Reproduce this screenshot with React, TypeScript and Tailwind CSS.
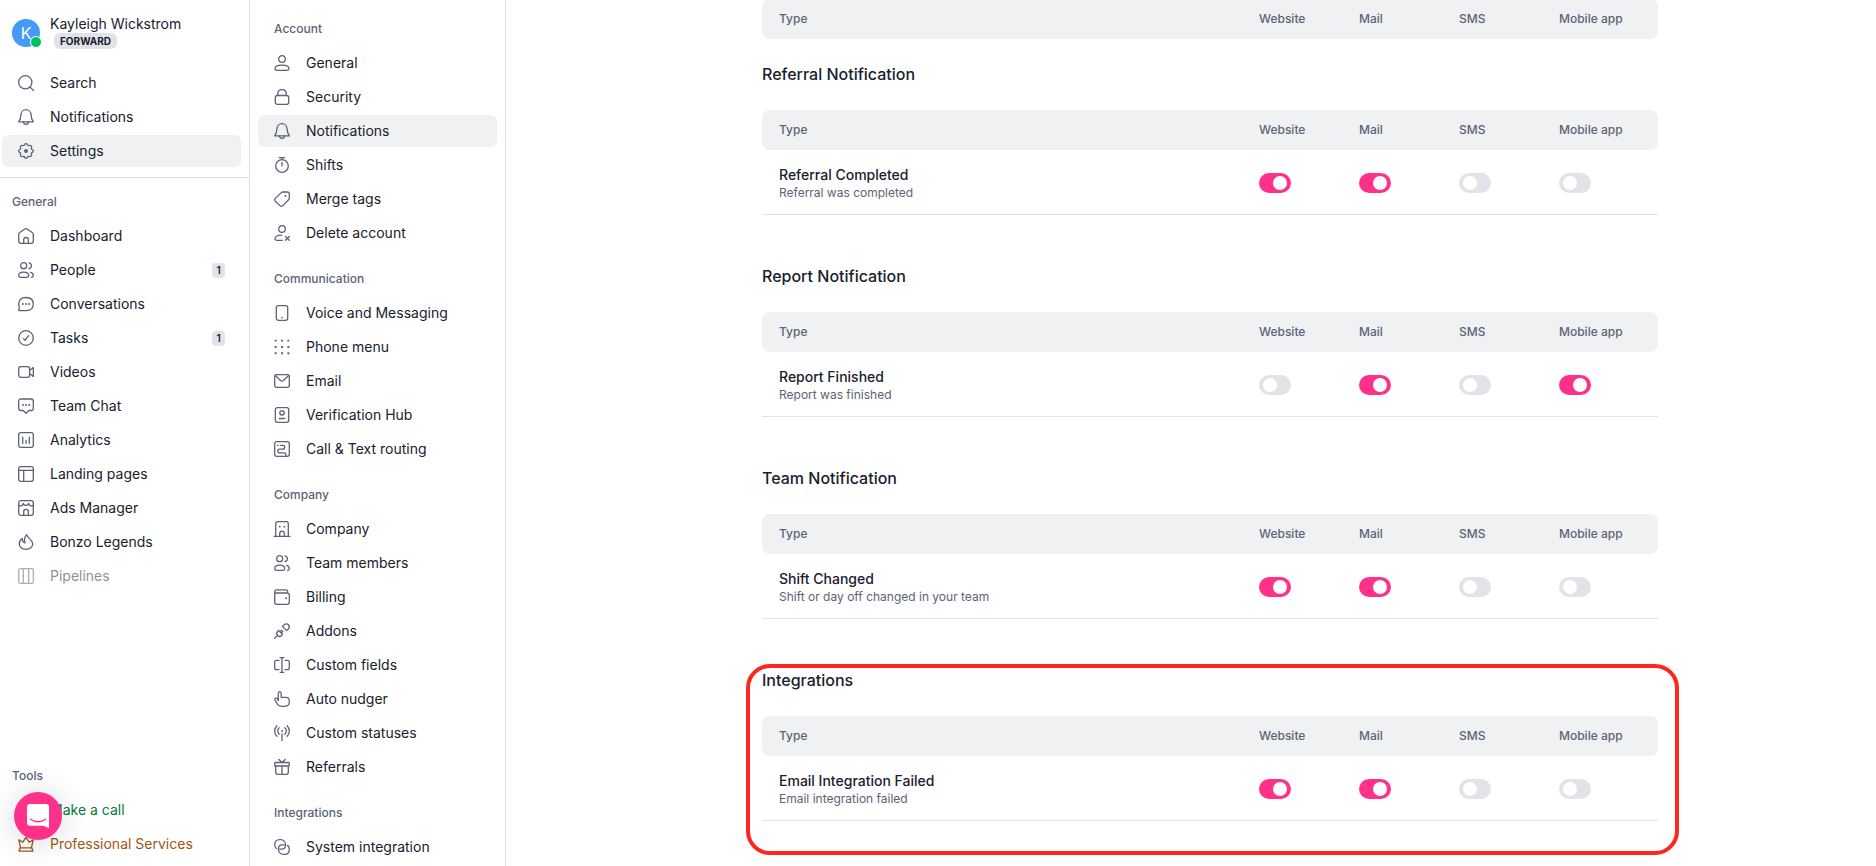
import { useState, type ReactNode } from "react";
import { clsx } from "clsx";

type NavItem = {
  label: string;
  icon: keyof typeof icons;
  count?: number;
  active?: boolean;
  muted?: boolean;
  className?: string;
};

type NotificationRow = {
  title: string;
  description: string;
  channels: boolean[];
};

type NotificationGroup = {
  title: string;
  rows: NotificationRow[];
  highlighted?: boolean;
};

// All icons are drawn on a 16x16 grid
const icons = {
  search: (
    <>
      <circle cx="7.3" cy="7.3" r="6.6" />
      <path d="m12.1 12.1 3.4 3.4" />
    </>
  ),
  bell: (
    <>
      <path d="M8 .7C5.2.7 3.1 2.8 3 5.6c-.1 3-.6 4.9-2.3 7.3h14.6c-1.7-2.4-2.2-4.300-2.300-7.300C12.900 2.800 10.800.7 8 .7Z" />
      <path d="M5.400 13c.2 1.500 1.200 2.300 2.600 2.300s2.400-.8 2.600-2.300" />
    </>
  ),
  gear: (
    <>
      <path d="M14.330 6.540A1.600 1.600 0 0 1 14.330 9.460A1.300 1.300 0 0 0 13.510 11.440A1.600 1.600 0 0 1 11.440 13.510A1.300 1.300 0 0 0 9.460 14.330A1.600 1.600 0 0 1 6.540 14.330A1.300 1.300 0 0 0 4.560 13.510A1.600 1.600 0 0 1 2.490 11.440A1.300 1.300 0 0 0 1.670 9.460A1.600 1.600 0 0 1 1.670 6.540A1.300 1.300 0 0 0 2.490 4.560A1.600 1.600 0 0 1 4.560 2.490A1.300 1.300 0 0 0 6.540 1.670A1.600 1.600 0 0 1 9.460 1.670A1.300 1.300 0 0 0 11.440 2.490A1.600 1.600 0 0 1 13.510 4.560A1.300 1.300 0 0 0 14.330 6.540Z" />
      <circle cx="8" cy="8" r="1.300" fill="currentColor" />
    </>
  ),
  home: (
    <>
      <path d="M.7 6.500c0-.9.3-1.500 1.100-2L6.800 1c.8-.5 1.600-.5 2.400 0l5 3.500c.8.5 1.100 1.100 1.100 2v6.600c0 1.300-.9 2.200-2.200 2.200H2.900c-1.300 0-2.200-.9-2.200-2.200V6.500Z" />
      <path d="M5.700 15.200v-3.400c0-1.500 1-2.300 2.300-2.300s2.300.8 2.300 2.300v3.400" />
    </>
  ),
  people: (
    <>
      <circle cx="5.700" cy="3.700" r="3" />
      <path d="M.7 13.600c0-2.100 2-3.400 5-3.400s5 1.300 5 3.400c0 1-.7 1.700-1.800 1.700H2.500c-1.100 0-1.800-.7-1.800-1.700Z" />
      <path d="M11 .9c1.500.3 2.400 1.300 2.400 2.800S12.500 6.200 11 6.500M12.700 10.300c1.700.5 2.600 1.700 2.600 3.200 0 1-.6 1.700-1.700 1.800" />
    </>
  ),
  chat: (
    <>
      <path d="M.7 8C.7 4 3.300 1.500 8 1.500S15.300 4 15.300 8 12.700 14.600 8 14.600H1.200c-.5 0-.7-.5-.4-.9.500-.7.7-1.400.5-2.300C.9 10.300.7 9.200.7 8Z" />
      <path d="M4.900 8h.1M8 8h.1M11.100 8h.1" strokeWidth="1.800" />
    </>
  ),
  check: (
    <>
      <circle cx="8" cy="8" r="7.300" />
      <path d="m5.400 8.600 1.800 1.700 3.300-4.600" />
    </>
  ),
  video: (
    <>
      <rect x=".7" y="2.700" width="10.900" height="10.600" rx="2.200" />
      <path d="m11.600 6.500 3.700-2.900v8.800l-3.700-2.900" />
    </>
  ),
  teamChat: (
    <>
      <path d="M2.900 1h10.200c1.300 0 2.200.9 2.200 2.200v7.100c0 1.300-.9 2.200-2.200 2.200h-2.200L8 15.200l-2.900-2.700H2.900c-1.300 0-2.200-.9-2.200-2.200V3.200C.7 1.900 1.600 1 2.900 1Z" />
      <path d="M4.900 7h.1M8 7h.1M11.100 7h.1" strokeWidth="1.800" />
    </>
  ),
  analytics: (
    <>
      <rect x=".7" y=".7" width="14.600" height="14.600" rx="2" />
      <path d="M4.700 5.200v6.300M8 8.500v3M11.300 5.200v6.300" />
    </>
  ),
  layout: (
    <>
      <rect x=".7" y=".7" width="14.600" height="14.600" rx="2" />
      <path d="M.7 4.300h14.600M5.700 4.300v11" />
    </>
  ),
  store: (
    <>
      <rect x=".7" y=".7" width="14.600" height="14.600" rx="2.200" />
      <path d="M.8 5.200c1.300 1.200 3.800 1 4.500-1.700.5 2.400 4.900 2.400 5.400 0 .7 2.700 3.200 2.900 4.500 1.700" />
      <path d="M5.700 15.200v-3.500c0-1.500 1-2.300 2.300-2.300s2.300.8 2.300 2.300v3.500" />
    </>
  ),
  flame: (
    <path d="M8.700.8C9 3.500 14.700 6 14.700 10c0 3-2.800 5.300-6.700 5.300S1.300 13 1.300 10c0-2.200 1-4.200 2.800-5.500.1 2.200 1 3.700 3 4.500C6 6 6.500 3 8.700.8Z" />
  ),
  columns: (
    <>
      <rect x=".7" y=".7" width="14.600" height="14.600" rx="1.500" />
      <path d="M5.300.7v14.600M10.700.7v14.600" />
    </>
  ),
  phoneCall: <path d="M2 1.500h3l1.500 3.700L4.700 6.700a9 9 0 0 0 4.600 4.600l1.500-1.800 3.700 1.500v3C7.500 15 1 8.500 2 1.500Z" />,
  crown: (
    <>
      <path d="M2.600 11.800.8 3.900l4 2.300L8 1.300l3.200 4.900 4-2.300-1.800 7.900" />
      <path d="M2.200 11.800h11.600l1.200 3.400H1l1.200-3.400Z" />
    </>
  ),
  user: (
    <>
      <circle cx="8" cy="4" r="3.300" />
      <path d="M1 13.600c0-2.200 2.800-3.500 7-3.500s7 1.300 7 3.500c0 1-.7 1.700-1.900 1.700H2.900C1.700 15.300 1 14.600 1 13.600Z" />
    </>
  ),
  lock: (
    <>
      <rect x="1.300" y="6.500" width="13.400" height="8.800" rx="2" />
      <path d="M3.700 6.500V5c0-2.700 1.700-4.300 4.300-4.300s4.300 1.600 4.300 4.300v1.500" />
    </>
  ),
  timer: (
    <>
      <circle cx="8" cy="9" r="6.300" />
      <path d="M5.300.7h5.400M8 .7v2M8 5.500V9" />
    </>
  ),
  tag: (
    <>
      <path d="M8.800 1h4.500c1.200 0 2 .8 2 2v4.200c0 .6-.2 1.100-.6 1.500l-5.900 5.900c-.9.9-2 .9-2.900 0L1.300 10.200c-.8-.8-.8-2 0-2.800l6-5.800c.4-.4.900-.6 1.500-.6Z" />
      <path d="M11.300 5h.1" strokeWidth="1.800" />
    </>
  ),
  userRemove: (
    <>
      <circle cx="8" cy="4" r="3.300" />
      <path d="M8.300 15.300H2.900c-1.200 0-1.900-.7-1.900-1.600 0-2.100 2.600-3.500 6.700-3.500M11.500 11.500l3.800 3.800M15.300 11.500l-3.800 3.800" />
    </>
  ),
  device: (
    <>
      <rect x="2.300" y=".7" width="11.400" height="14.600" rx="2" />
      <path d="M8 12.600h.1" strokeWidth="1.600" />
    </>
  ),
  keypad: (
    <path
      d="M1.600 1.600h.1M8 1.600h.1M14.300 1.600h.1M1.600 8h.1M8 8h.1M14.300 8h.1M1.600 14.300h.1M8 14.300h.1M14.300 14.300h.1"
      strokeWidth="1.900"
      strokeLinecap="square"
    />
  ),
  mail: (
    <>
      <rect x=".7" y="1.700" width="14.600" height="12.600" rx="2" />
      <path d="m1.300 2.500 5.300 5c.9.8 1.900.8 2.800 0l5.300-5" />
    </>
  ),
  idCard: (
    <>
      <rect x="1.300" y=".7" width="13.400" height="14.600" rx="2" />
      <circle cx="8" cy="5.800" r="2.200" />
      <path d="M5.200 11.500h5.600" />
    </>
  ),
  routing: (
    <>
      <rect x=".7" y=".7" width="14.600" height="14.600" rx="2" />
      <path d="M3.800 4.300h.1" strokeWidth="1.600" />
      <path d="M6.300 4.300h2.300c1.300 0 2.100.8 2.100 2s-.8 1.900-2.100 1.900H5.800c-1.200 0-2 .7-2 1.800s.8 1.900 2 1.900h4.500c1 0 1.500.5 1.500 1.500v1.500" />
    </>
  ),
  building: (
    <>
      <path d="M1.700 15.300V2.700c0-1.300.7-2 2-2h8.600c1.300 0 2 .7 2 2v12.600M0 15.300h16" />
      <path d="M5.700 15.200v-2.800c0-1.500 1-2.300 2.300-2.300s2.300.8 2.300 2.300v2.800" />
      <path d="M5.700 5.700h.1M10.300 5.700h.1" strokeWidth="1.800" />
    </>
  ),
  wallet: (
    <>
      <path d="M.7 2.600v10.500c0 1.400.8 2.200 2.200 2.200h10.200c1.400 0 2.200-.8 2.200-2.200V6c0-1.300-.8-2-2.200-2H2.400C1.300 4 .7 3.500.7 2.600S1.400.9 2.400.9h9.300c1.300 0 2 .7 2 2V4" />
      <path d="M12 9.300h.1" strokeWidth="1.900" />
    </>
  ),
  plug: (
    <>
      <path d="m4.600 7.400 4 4-1 1.100c-1.200 1.200-2.900 1.200-4 .1s-1.100-2.900 0-4.100l1-1.100ZM8.400 3.400l4.200 4.200 1.700-1.600c1.200-1.200 1.200-3 .1-4.200s-3-1.200-4.200 0L8.400 3.400Z" />
      <path d="m.7 15.300 2.900-2.900M6 8.800l1.700-1.700M7.200 10l1.700-1.700" />
    </>
  ),
  textField: (
    <path d="M8 1v14M6.200.7h3.600M6.200 15.300h3.600M5 3.300H2.600C1.400 3.300.7 4 .7 5.200v5.600c0 1.200.7 1.900 1.900 1.900H5M11 3.300h2.400c1.200 0 1.900.7 1.900 1.900v5.600c0 1.200-.7 1.900-1.900 1.900H11" />
  ),
  pointer: (
    <path d="M4.300 9.600V2.200C4.300 1.300 4.900.7 5.700.7s1.500.6 1.500 1.500v4.100h4.600c2.300 0 3.500 1.200 3.500 3.300v1.200c0 2.800-1.700 4.500-4.400 4.500H7.400c-1.900 0-3.200-.7-4.100-2.300L1 9.100c-.5-.9-.2-1.600.5-1.900.8-.3 1.500 0 2 .8l.8 1.600" />
  ),
  broadcast: (
    <>
      <path d="M8 9v6.600M5.200 2.800c-2 1.700-2 4.800 0 6.500M10.800 2.800c2 1.700 2 4.800 0 6.500M2.900.8c-3 3-3 7.600 0 10.500M13.100.8c3 3 3 7.600 0 10.500" />
      <path d="M8 6h.1" strokeWidth="1.800" />
    </>
  ),
  gift: (
    <>
      <path d="M1.700 7v6.200c0 1.300.8 2.100 2.100 2.100h8.400c1.300 0 2.100-.8 2.100-2.100V7M8 7v8.300" />
      <rect x=".7" y="3.500" width="14.600" height="3.500" rx=".8" />
      <path d="M8 3.500 4.800.5M8 3.500l3.200-3" />
    </>
  ),
  link: (
    <>
      <path d="M10.300 5.900h-2c-2.300 0-3.900 1.700-3.900 4.100 0 3.200 2 5.300 5 5.300h1c3 0 4.900-1.900 4.900-4.900 0-1.800-.6-3.200-1.700-4" />
      <path d="M5.700 10.100h2c2.300 0 3.900-1.700 3.900-4.100 0-3.200-2-5.300-5-5.300h-1C2.600.7.7 2.600.7 5.600c0 1.800.6 3.200 1.700 4" />
    </>
  ),
};

const profileNav: NavItem[] = [
  { label: "Search", icon: "search" },
  { label: "Notifications", icon: "bell" },
  { label: "Settings", icon: "gear", active: true },
];

const generalNav: NavItem[] = [
  { label: "Dashboard", icon: "home" },
  { label: "People", icon: "people", count: 1 },
  { label: "Conversations", icon: "chat" },
  { label: "Tasks", icon: "check", count: 1 },
  { label: "Videos", icon: "video" },
  { label: "Team Chat", icon: "teamChat" },
  { label: "Analytics", icon: "analytics" },
  { label: "Landing pages", icon: "layout" },
  { label: "Ads Manager", icon: "store" },
  { label: "Bonzo Legends", icon: "flame" },
  { label: "Pipelines", icon: "columns", muted: true },
];

const toolsNav: NavItem[] = [
  { label: "Make a call", icon: "phoneCall", className: "text-[#067a3c]" },
  { label: "Professional Services", icon: "crown", className: "text-[#a05714]" },
];

const settingsNav: { heading: string; items: NavItem[] }[] = [
  {
    heading: "Account",
    items: [
      { label: "General", icon: "user" },
      { label: "Security", icon: "lock" },
      { label: "Notifications", icon: "bell", active: true },
      { label: "Shifts", icon: "timer" },
      { label: "Merge tags", icon: "tag" },
      { label: "Delete account", icon: "userRemove" },
    ],
  },
  {
    heading: "Communication",
    items: [
      { label: "Voice and Messaging", icon: "device" },
      { label: "Phone menu", icon: "keypad" },
      { label: "Email", icon: "mail" },
      { label: "Verification Hub", icon: "idCard" },
      { label: "Call & Text routing", icon: "routing" },
    ],
  },
  {
    heading: "Company",
    items: [
      { label: "Company", icon: "building" },
      { label: "Team members", icon: "people" },
      { label: "Billing", icon: "wallet" },
      { label: "Addons", icon: "plug" },
      { label: "Custom fields", icon: "textField" },
      { label: "Auto nudger", icon: "pointer" },
      { label: "Custom statuses", icon: "broadcast" },
      { label: "Referrals", icon: "gift" },
    ],
  },
  {
    heading: "Integrations",
    items: [{ label: "System integration", icon: "link" }],
  },
];

const channelNames = ["Website", "Mail", "SMS", "Mobile app"];

const groups: NotificationGroup[] = [
  {
    title: "Referral Notification",
    rows: [
      {
        title: "Referral Completed",
        description: "Referral was completed",
        channels: [true, true, false, false],
      },
    ],
  },
  {
    title: "Report Notification",
    rows: [
      {
        title: "Report Finished",
        description: "Report was finished",
        channels: [false, true, false, true],
      },
    ],
  },
  {
    title: "Team Notification",
    rows: [
      {
        title: "Shift Changed",
        description: "Shift or day off changed in your team",
        channels: [true, true, false, false],
      },
    ],
  },
  {
    title: "Integrations",
    highlighted: true,
    rows: [
      {
        title: "Email Integration Failed",
        description: "Email integration failed",
        channels: [true, true, false, false],
      },
    ],
  },
];

function Icon({ name, className }: { name: keyof typeof icons; className?: string }) {
  return (
    <svg
      viewBox="0 0 16 16"
      fill="none"
      stroke="currentColor"
      strokeWidth="1.3"
      strokeLinecap="round"
      strokeLinejoin="round"
      aria-hidden="true"
      className={clsx("size-4 shrink-0 overflow-visible", className)}
    >
      {icons[name]}
    </svg>
  );
}

function NavLink({ item }: { item: NavItem }) {
  return (
    <a
      href="#"
      className={clsx(
        "flex h-8 items-center gap-4 rounded-md px-4 text-sm",
        item.active && "bg-[#f0f1f3]",
        item.muted && "opacity-50",
        item.className
      )}
    >
      <Icon name={item.icon} className={item.className ? undefined : "text-[#5b6376]"} />
      <span className="flex-1 truncate">{item.label}</span>
      {item.count !== undefined && (
        <span className="w-[13px] rounded bg-[#e2e3e8] text-center text-[10px] leading-[15px] font-semibold">
          {item.count}
        </span>
      )}
    </a>
  );
}

function NavList({ items }: { items: NavItem[] }) {
  return (
    <ul className="flex flex-col gap-0.5">
      {items.map((item) => (
        <li key={item.label}>
          <NavLink item={item} />
        </li>
      ))}
    </ul>
  );
}

function NavHeading({ children, className }: { children: ReactNode; className?: string }) {
  return <h2 className={clsx("pb-2 text-xs leading-5 font-medium text-[#5b6376]", className)}>{children}</h2>;
}

function Toggle({ label, defaultChecked }: { label: string; defaultChecked: boolean }) {
  const [checked, setChecked] = useState(defaultChecked);

  return (
    <input
      type="checkbox"
      role="switch"
      aria-label={label}
      checked={checked}
      onChange={(e) => setChecked(e.target.checked)}
      className="relative block h-5 w-8 cursor-pointer appearance-none rounded-full bg-[#e2e3e8] before:absolute before:top-[3px] before:left-1 before:size-3.5 before:rounded-full before:bg-white checked:bg-[#ff318a] checked:before:left-3.5"
    />
  );
}

function NotificationTable({ rows }: { rows: NotificationRow[] }) {
  return (
    <table className="w-full table-fixed border-separate border-spacing-0 text-left">
      <thead>
        <tr className="h-10 text-xs text-[#5b6376]">
          <th className="rounded-l-lg bg-[#f0f1f3] pl-[17px] font-medium">Type</th>
          {channelNames.map((name) => (
            <th key={name} className="w-25 bg-[#f0f1f3] pl-4 font-medium last:w-[115px] last:rounded-r-lg">
              {name}
            </th>
          ))}
        </tr>
      </thead>
      <tbody>
        {rows.map((row) => (
          <tr key={row.title} className="h-[65px]">
            <td className="border-b border-[#e2e3e8] pt-0.5 pl-[17px]">
              <p className="text-sm leading-5 font-medium">{row.title}</p>
              <p className="text-xs leading-4 text-[#5b6376]">{row.description}</p>
            </td>
            {row.channels.map((enabled, i) => (
              <td key={channelNames[i]} className="border-b border-[#e2e3e8] pt-0.5 pl-4">
                <Toggle label={`${row.title} ${channelNames[i]}`} defaultChecked={enabled} />
              </td>
            ))}
          </tr>
        ))}
      </tbody>
    </table>
  );
}

function MainSidebar() {
  return (
    <aside className="flex w-[250px] shrink-0 flex-col overflow-hidden border-r border-[#e2e3e8] pb-1.5">
      <div className="flex items-start gap-2.5 px-3 pt-[15px] pb-[18px]">
        <div className="relative mt-1 flex size-7 shrink-0 items-center justify-center rounded-full bg-[#4599f7] text-white">
          K
          <span className="absolute -right-0.5 -bottom-px size-3 rounded-full border border-white bg-[#00bf5c]" />
        </div>
        <div>
          <p className="text-sm leading-[18px]">Kayleigh Wickstrom</p>
          <p className="ml-1 w-fit rounded-md bg-[#e2e3e8] px-1.5 text-[10px] leading-4 font-bold">FORWARD</p>
        </div>
      </div>
      <nav className="border-b border-[#e2e3e8] pr-2 pb-2.5 pl-0.5">
        <NavList items={profileNav} />
      </nav>
      <nav className="pt-3.5 pr-2 pl-0.5">
        <NavHeading className="pl-2.5">General</NavHeading>
        <NavList items={generalNav} />
      </nav>
      <nav className="mt-auto pr-2 pl-0.5">
        <NavHeading className="pl-2.5">Tools</NavHeading>
        <NavList items={toolsNav} />
      </nav>
    </aside>
  );
}

function SettingsSidebar() {
  return (
    <aside className="w-64 shrink-0 overflow-y-auto border-r border-[#e2e3e8] px-2 [scrollbar-width:none]">
      {settingsNav.map((group) => (
        <nav key={group.heading} className="pt-5 first:pt-[19px]">
          <NavHeading className="pl-4">{group.heading}</NavHeading>
          <NavList items={group.items} />
        </nav>
      ))}
    </aside>
  );
}

export default function App() {
  return (
    <div className="flex h-screen overflow-hidden bg-white font-[Inter,sans-serif] text-[#18212d]">
      <MainSidebar />
      <SettingsSidebar />

      <main className="min-w-0 flex-1 overflow-y-auto pl-[38px] [scrollbar-width:none]">
        <div className="mx-auto -mt-px max-w-4xl">
          <NotificationTable rows={[]} />
          <div className="pt-[23px]">
            {groups.map((group) => (
              <section key={group.title} className="relative pb-[49px]">
                <h3 className="mb-6 text-base leading-6 font-medium">{group.title}</h3>
                <NotificationTable rows={group.rows} />
                {group.highlighted && (
                  <div className="pointer-events-none absolute -top-1 -right-[21px] bottom-[15px] -left-4 rounded-3xl border-4 border-[#ff261f]" />
                )}
              </section>
            ))}
          </div>
        </div>
      </main>

      {/* Support chat launcher */}
      <button
        type="button"
        aria-label="Open chat"
        className="fixed bottom-[26px] left-3.5 flex size-12 cursor-pointer items-center justify-center rounded-full bg-[#ff318a] shadow-[0_2px_32px_rgba(0,0,0,0.16)]"
      >
        <svg viewBox="0 0 22 24" className="h-6 w-[22px]" aria-hidden="true">
          <path d="M3 0h16a3 3 0 0 1 3 3v21s-3-.8-5.500-2.200H3a3 3 0 0 1-3-3V3a3 3 0 0 1 3-3Z" fill="white" />
          <path d="M3.600 15.300c4.200 3.300 10.600 3.300 14.800 0" fill="none" stroke="#ff318a" strokeWidth="1.400" strokeLinecap="round" />
        </svg>
      </button>
    </div>
  );
}
